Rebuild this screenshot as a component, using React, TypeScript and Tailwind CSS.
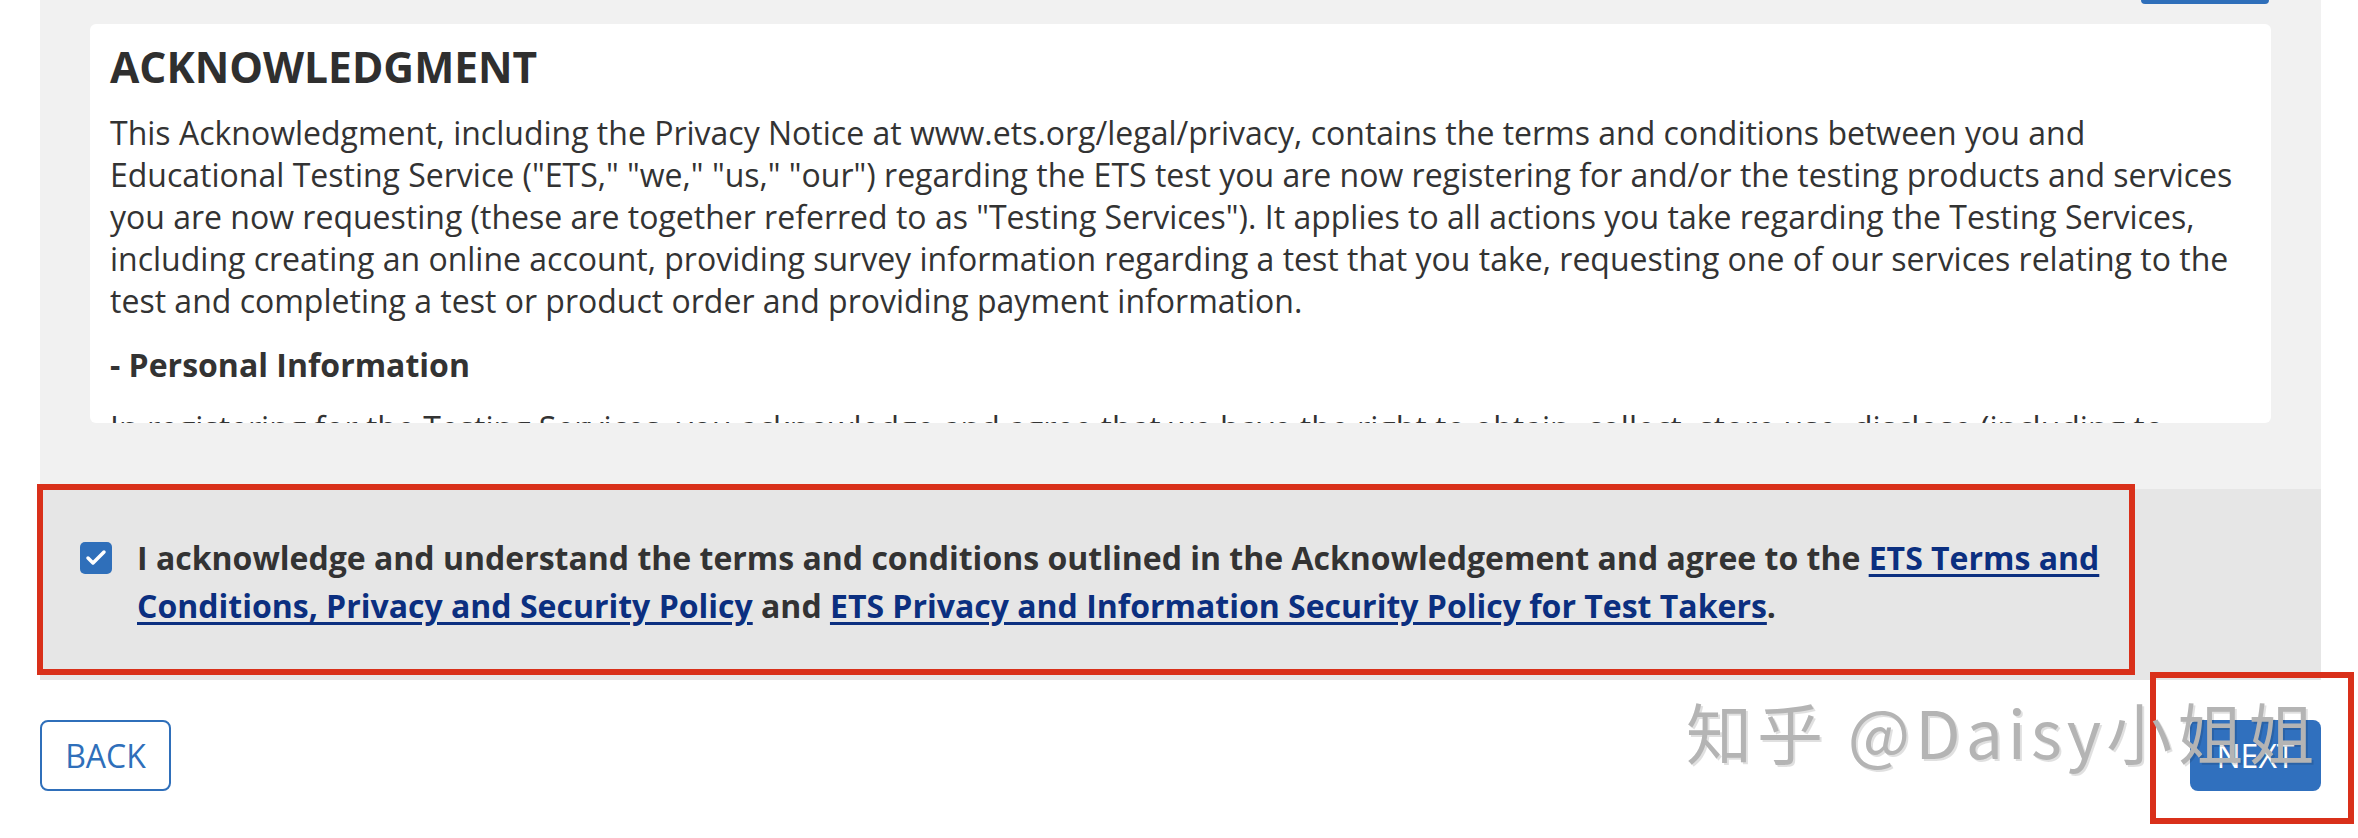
import { Check } from "lucide-react";

export default function App() {
  return (
    <div className="relative h-[838px] w-full overflow-hidden bg-white font-['Open_Sans',sans-serif] text-[#333333]">
      <div className="ml-[40px] w-[2281px]">
        {/* Acknowledgment panel */}
        <div className="bg-[#f1f1f1] px-[50px] pb-[66px]">
          <div className="flex h-[24px] justify-end">
            <div className="mr-[2px] h-[4px] w-[128px] rounded-b-[6px] bg-[#2f6fba]" />
          </div>
          <div className="h-[399px] overflow-hidden rounded-[6px] bg-white pl-[20px] pr-[29px] pt-[18px]">
            <h2 className="text-[42.5px] font-bold leading-[50px] text-[#2f2f2f]">ACKNOWLEDGMENT</h2>
            <p className="mt-[20px] text-[32px] leading-[42px]">
              This Acknowledgment, including the Privacy Notice at www.ets.org/legal/privacy, contains the terms and
              conditions between you and Educational Testing Service ("ETS," "we," "us," "our") regarding the ETS test you
              are now registering for and/or the testing products and services you are now requesting (these are together
              referred to as "Testing Services"). It applies to all actions you take regarding the Testing Services,
              including creating an online account, providing survey information regarding a test that you take,
              requesting one of our services relating to the test and completing a test or product order and providing
              payment information.
            </p>
            <h3 className="mt-[22px] text-[32px] font-bold leading-[42px]">- Personal Information</h3>
            <p className="mt-[21px] text-[32px] leading-[42px]">
              In registering for the Testing Services, you acknowledge and agree that we have the right to obtain,
              collect, store use, disclose (including to third parties), and otherwise process your personal information.
            </p>
          </div>
        </div>

        {/* Agreement checkbox */}
        <div className="flex h-[191px] items-start gap-[25px] bg-[#e6e6e6] pl-[40px] pr-[50px] pt-[45px]">
          <div className="mt-[8px] flex h-[32px] w-[32px] shrink-0 items-center justify-center rounded-[5px] bg-[#2f6fba]">
            <Check className="h-[24px] w-[24px] text-white" strokeWidth={3.5} />
          </div>
          <p className="text-[32px] font-bold leading-[48px] text-[#333333]">
            I acknowledge and understand the terms and conditions outlined in the Acknowledgement and agree to the{" "}
            <a className="text-[#0b2f80] underline underline-offset-[4px]">ETS Terms and Conditions, Privacy and Security Policy</a>{" "}
            and{" "}
            <a className="text-[#0b2f80] underline underline-offset-[4px]">ETS Privacy and Information Security Policy for Test Takers</a>.
          </p>
        </div>

        {/* Navigation */}
        <div className="mt-[40px] flex justify-between">
          <button className="h-[71px] w-[131px] rounded-[8px] border-2 border-[#2f6fba] bg-white text-[32px] text-[#2f6fba]">
            BACK
          </button>
          <button className="h-[71px] w-[131px] rounded-[8px] bg-[#3070be] text-[32px] text-white">NEXT</button>
        </div>
      </div>

      {/* Annotation boxes */}
      <div className="pointer-events-none absolute left-[37px] top-[484px] h-[191px] w-[2098px] border-[6px] border-[#d9301a]" />
      <div className="pointer-events-none absolute left-[2150px] top-[672px] h-[152px] w-[204px] border-[6px] border-[#d9301a]" />

      {/* Watermark */}
      <div className="pointer-events-none absolute left-[1686px] top-[680px] whitespace-nowrap font-['Noto_Sans_CJK_SC',sans-serif] text-[66px] font-normal leading-[100px] tracking-[5px] text-[#b4b4b4] [text-shadow:2px_2px_0_rgba(0,0,0,0.12)]">
        知乎 @Daisy小姐姐
      </div>
    </div>
  );
}
